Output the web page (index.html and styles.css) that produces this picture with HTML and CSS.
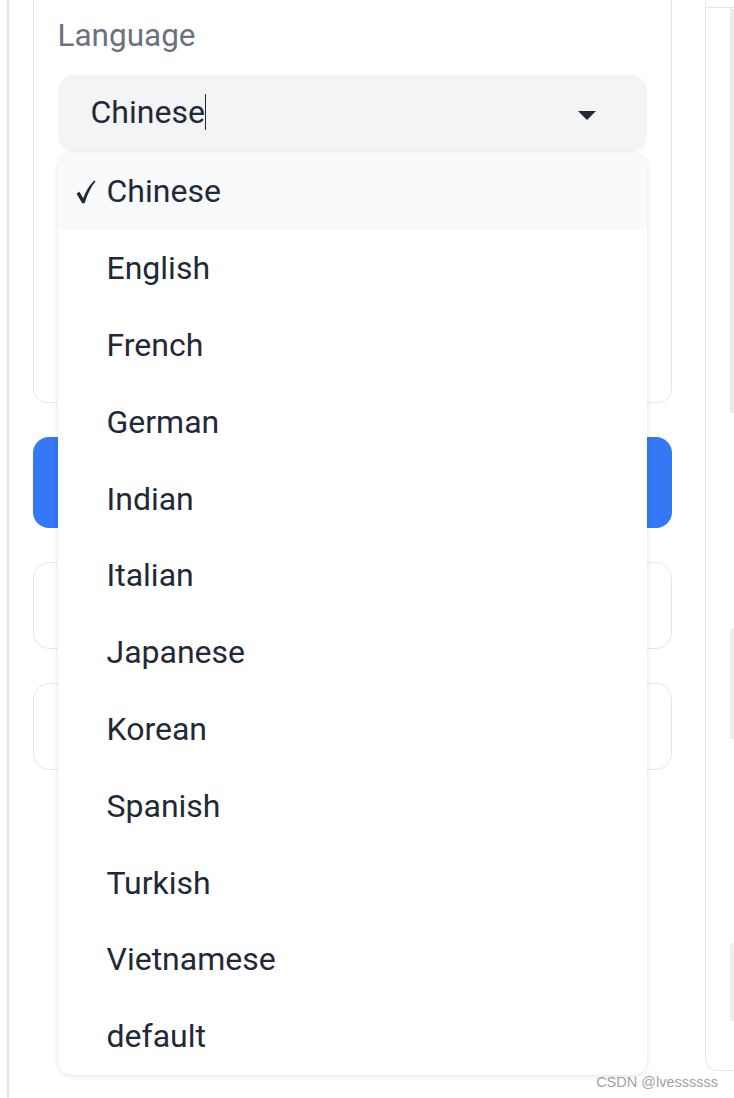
FILE: index.html
```html
<!DOCTYPE html>
<html lang="en">
<head>
<meta charset="utf-8">
<title>Language</title>
<link rel="stylesheet" href="styles.css">
</head>
<body>
<div class="page">
  <main class="main">
    <section class="card">
      <div class="field">
        <div class="label">Language</div>
        <div class="select-wrap">
          <div class="select">
            <span class="value">Chinese</span>
            <svg class="caret" width="18" height="10" viewBox="0 0 18 10"><path d="M0 0H18L9 9Z" fill="#1f2937"/></svg>
          </div>
          <ul class="menu">
            <li class="item active"><svg class="check" width="20" height="24" viewBox="0 0 20 24"><path d="M0.5 13.5 L3.5 11.8 L7.2 18.2 C10 11 13.5 5 18.2 0.5 L19.5 1.6 C15 7 11.5 14 8.6 23.2 L6.2 23.2 Z" fill="#1f2937"/></svg>Chinese</li>
            <li class="item">English</li>
            <li class="item">French</li>
            <li class="item">German</li>
            <li class="item">Indian</li>
            <li class="item">Italian</li>
            <li class="item">Japanese</li>
            <li class="item">Korean</li>
            <li class="item">Spanish</li>
            <li class="item">Turkish</li>
            <li class="item">Vietnamese</li>
            <li class="item">default</li>
          </ul>
        </div>
      </div>
      <div class="card-rest"></div>
    </section>
    <div class="primary-btn"></div>
    <div class="outline-box"></div>
    <div class="outline-box"></div>
  </main>
  <aside class="side">
    <div class="side-head"></div>
    <div class="side-body">
      <div class="side-block tall"></div>
      <div class="side-block b1"></div>
      <div class="side-block b2"></div>
    </div>
  </aside>
</div>
<div class="watermark">CSDN @lvessssss</div>
</body>
</html>
```

FILE: styles.css
```css
* { box-sizing: border-box; }
html, body { margin: 0; padding: 0; }
body {
  width: 734px;
  height: 1098px;
  overflow: hidden;
  background: #ffffff;
  font-family: Roboto, "Liberation Sans", sans-serif;
  color: #1f2937;
  position: relative;
}
.page {
  display: flex;
  height: 1098px;
  overflow: hidden;
}
.main {
  width: 698px;
  margin-left: 7px;
  border-left: 2px solid #e5e7eb;
  padding: 0 33px 0 24px;
  display: flex;
  flex-direction: column;
  gap: 34px;
  flex-shrink: 0;
}
.card {
  margin-top: -40px;
  border: 1.5px solid #e5e7eb;
  border-radius: 14px;
  padding: 55px 24px 0 23.5px;
  height: 443px;
}
.label {
  font-size: 31.5px;
  line-height: 40px;
  color: #6b7280;
  margin-bottom: 19px;
}
.select-wrap { position: relative; }
.select {
  height: 77px;
  background: #f3f4f6;
  border-radius: 16px;
  display: flex;
  align-items: center;
  justify-content: space-between;
  padding: 0 51px 0 33px;
}
.value {
  font-size: 32px;
  line-height: 36px;
  border-right: 1.5px solid #1f2937;
  padding-right: 0;
  margin-top: -3px;
}
.caret { display: block; margin-top: 4px; }
.menu {
  position: absolute;
  top: 78px;
  left: 0;
  right: 0;
  margin: 0;
  padding: 0;
  list-style: none;
  background: #ffffff;
  border-radius: 14px;
  box-shadow: 0 1px 5px rgba(0, 0, 0, 0.12);
  overflow: hidden;
  z-index: 5;
}
.item {
  height: 76.8px;
  display: flex;
  align-items: center;
  padding-left: 49px;
  font-size: 32px;
  position: relative;
}
.item.active { background: #f9fafb; }
.check {
  position: absolute;
  left: 18px;
  top: 27px;
  display: block;
}
.primary-btn {
  height: 91px;
  background: #3478f6;
  border-radius: 16px;
  flex-shrink: 0;
}
.outline-box {
  height: 87px;
  border: 1.5px solid #e5e7eb;
  border-radius: 16px;
  flex-shrink: 0;
}
.side {
  flex: 1;
  margin-top: -40px;
  height: 1111px;
  border-left: 1.5px solid #e5e7eb;
  border-bottom: 1.5px solid #e5e7eb;
  border-bottom-left-radius: 12px;
  display: flex;
  flex-direction: column;
}
.side-head {
  height: 48px;
  border-bottom: 1.5px solid #e5e7eb;
  flex-shrink: 0;
}
.side-body {
  padding: 1px 0 0 23.5px;
  position: relative;
  flex: 1;
}
.side-block {
  background: #ebebee;
}
.side-block.tall {
  height: 404px;
  border-left: 1.5px solid #e5e7eb;
  background: #ececef;
}
.side-block.b1 {
  margin-top: 215px;
  height: 111px;
  border-top-left-radius: 12px;
  background: #efeff1;
}
.side-block.b2 {
  margin-top: 204px;
  height: 78px;
  border-top-left-radius: 12px;
  background: #efeff1;
}
.watermark {
  position: absolute;
  right: 16px;
  top: 1074px;
  font-family: "Liberation Sans", Arial, sans-serif;
  font-size: 14.5px;
  color: #a3a3a3;
}
```
